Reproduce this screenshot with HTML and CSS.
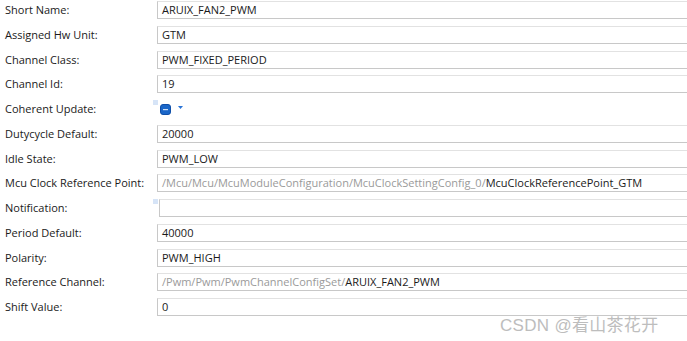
FILE: index.html
```html
<!DOCTYPE html>
<html>
<head>
    <title>PwmChannel</title>
    <link rel="stylesheet" href="styles.css">
</head>
<body>
    <div class="form">
        <div class="row"><div class="label">Short Name:</div><div class="field">ARUIX_FAN2_PWM</div></div>
        <div class="row"><div class="label">Assigned Hw Unit:</div><div class="field">GTM</div></div>
        <div class="row"><div class="label">Channel Class:</div><div class="field">PWM_FIXED_PERIOD</div></div>
        <div class="row"><div class="label">Channel Id:</div><div class="field">19</div></div>
        <div class="row">
            <div class="label">Coherent Update:</div>
            <div class="check-cell">
                <span class="marker"></span>
                <svg class="checkbox" width="11" height="11" viewBox="0 0 11 11">
                    <rect x="0.5" y="0.5" width="10" height="10" rx="2.5" fill="#1a66c8" stroke="#0f4fa8"/>
                    <rect x="3" y="5" width="5" height="1.2" fill="#cfe0f7"/>
                </svg>
                <svg class="arrow" width="5" height="3" viewBox="0 0 5 3">
                    <polygon points="0,0 5,0 2.5,3" fill="#2a74d6"/>
                </svg>
            </div>
        </div>
        <div class="row"><div class="label">Dutycycle Default:</div><div class="field">20000</div></div>
        <div class="row"><div class="label">Idle State:</div><div class="field">PWM_LOW</div></div>
        <div class="row"><div class="label">Mcu Clock Reference Point:</div><div class="field"><span class="path">/Mcu/Mcu/McuModuleConfiguration/McuClockSettingConfig_0/</span>McuClockReferencePoint_GTM</div></div>
        <div class="row"><div class="label">Notification:</div><div class="field-wrap"><span class="marker"></span><div class="field"></div></div></div>
        <div class="row"><div class="label">Period Default:</div><div class="field">40000</div></div>
        <div class="row"><div class="label">Polarity:</div><div class="field">PWM_HIGH</div></div>
        <div class="row"><div class="label">Reference Channel:</div><div class="field"><span class="path">/Pwm/Pwm/PwmChannelConfigSet/</span>ARUIX_FAN2_PWM</div></div>
        <div class="row"><div class="label">Shift Value:</div><div class="field">0</div></div>
    </div>
    <div class="watermark">CSDN @看山茶花开</div>
</body>
</html>
```
FILE: styles.css
```css
body{
    margin: 0;
    background: #ffffff;
    overflow: hidden;
    font-family: "Open Sans", "Noto Sans CJK SC", sans-serif;
    font-size: 11px;
    color: #1a1a1a;
}
.form{
    padding-top: 1px;
}
.row{
    display: flex;
    align-items: flex-start;
    height: 24.75px;
}
.label{
    width: 152px;
    padding-left: 5px;
    line-height: 18px;
    flex-shrink: 0;
}
.field{
    flex: 1;
    height: 18px;
    box-sizing: border-box;
    border: 1px solid #c8c8c8;
    border-top-color: #e2e2e2;
    border-right: none;
    padding-left: 4px;
    line-height: 16px;
    white-space: nowrap;
    overflow: hidden;
    background: #ffffff;
}
.path{
    color: #9a9a9a;
}
.check-cell{
    display: flex;
    align-items: flex-start;
}
.marker{
    display: block;
    flex-shrink: 0;
    width: 5px;
    height: 5px;
    margin-left: -4px;
    background-color: #d6e4f7;
    background-image:
        linear-gradient(90deg, transparent 0 1px, #d6e4f7 1px 2px, transparent 2px 3px, #d6e4f7 3px 4px, transparent 4px),
        linear-gradient(#d6e4f7 0 0);
    background-color: #7aa5e2;
}
.checkbox{
    display: block;
    margin-top: 4px;
    margin-left: 2px;
}
.arrow{
    display: block;
    margin-top: 6px;
    margin-left: 7px;
}
.field-wrap{
    flex: 1;
    display: flex;
    align-items: flex-start;
}
.field-wrap .field{
    margin-left: 1px;
}
.watermark{
    position: absolute;
    left: 500px;
    top: 311px;
    font-family: "Liberation Sans", "Noto Sans CJK SC", sans-serif;
    font-size: 17px;
    color: #bdbdbd;
    letter-spacing: 0.3px;
}
```
